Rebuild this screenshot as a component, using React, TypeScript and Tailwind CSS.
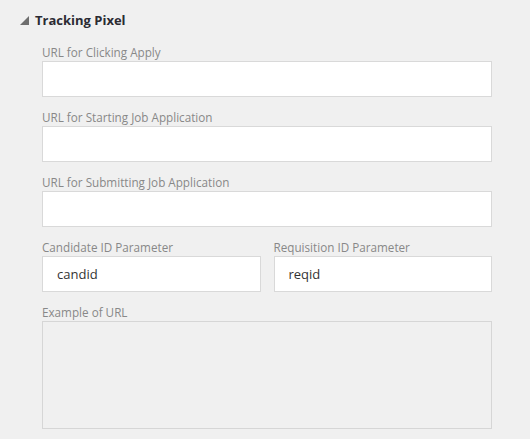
import React from 'react';

const Field: React.FC<{ label: string; value?: string; className?: string }> = ({ label, value, className }) => (
  <div className={`flex flex-col ${className ?? ''}`}>
    <label className="h-5 pt-px text-[11.7px] leading-5 text-[#888888]">{label}</label>
    <input
      readOnly
      value={value ?? ''}
      className="h-[36px] w-full border border-[#d9d9d9] bg-white px-[14px] text-[13px] text-[#333333] outline-none"
    />
  </div>
);

const App: React.FC = () => {
  return (
    <div
      className="h-[439px] w-[530px] bg-[#f0f0f0]"
      style={{ fontFamily: '"Open Sans", "Noto Sans", sans-serif' }}
    >
      <div className="flex h-[31px] items-center gap-[6px] pl-[20px] pt-[10px]">
        <svg width="9" height="9" viewBox="0 0 9 9">
          <polygon points="9,0 9,9 0,9" fill="#6e6e6e" />
        </svg>
        <h2 className="text-[13px] font-bold text-[#2b2b33]">Tracking Pixel</h2>
      </div>
      <div className="flex flex-col gap-[9px] pl-[42px] pr-[38px] pt-[10px]">
        <Field label="URL for Clicking Apply" />
        <Field label="URL for Starting Job Application" />
        <Field label="URL for Submitting Job Application" />
        <div className="grid grid-cols-2 gap-[13px]">
          <Field label="Candidate ID Parameter" value="candid" />
          <Field label="Requisition ID Parameter" value="reqid" />
        </div>
        <div className="flex flex-col">
          <label className="h-5 pt-px text-[11.7px] leading-5 text-[#888888]">Example of URL</label>
          <div className="h-[108px] border border-[#d6d6d6] bg-[#f0f0f0]" />
        </div>
      </div>
    </div>
  );
};

export default App;
